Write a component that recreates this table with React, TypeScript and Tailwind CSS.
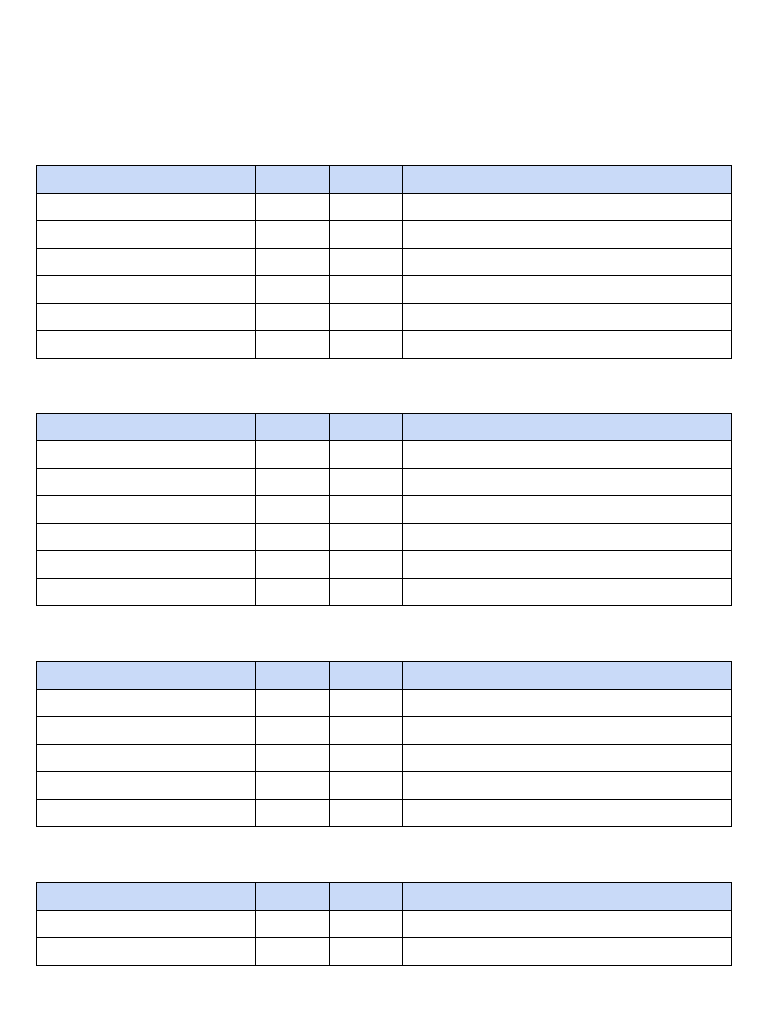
import React from "react";

const cols = "grid grid-cols-[219px_74px_73px_329px]";

function Table({ rows }: { rows: number }) {
  return (
    <div className="w-[696px] border-t border-l border-black">
      <div className={cols}>
        {[0, 1, 2, 3].map((c) => (
          <div key={c} className="h-[27.5px] border-r border-b border-black bg-[#c9daf8]" />
        ))}
      </div>
      {Array.from({ length: rows }).map((_, r) => (
        <div key={r} className={cols}>
          {[0, 1, 2, 3].map((c) => (
            <div key={c} className="h-[27.5px] border-r border-b border-black bg-white" />
          ))}
        </div>
      ))}
    </div>
  );
}

export default function App() {
  return (
    <div className="w-[768px] h-[1024px] bg-white pl-[36px] pt-[165px] flex flex-col font-['Liberation_Sans',sans-serif]">
      <Table rows={6} />
      <div className="h-[54px]" />
      <Table rows={6} />
      <div className="h-[55px]" />
      <Table rows={5} />
      <div className="h-[55px]" />
      <Table rows={2} />
    </div>
  );
}
